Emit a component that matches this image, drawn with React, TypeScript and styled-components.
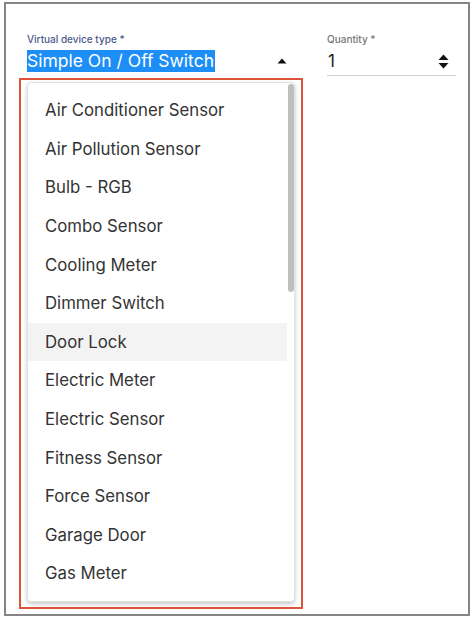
import React from 'react';
import styled, {createGlobalStyle} from 'styled-components';

const GlobalStyle = createGlobalStyle`
  html, body {
    margin: 0;
    padding: 0;
    background: #ffffff;
  }

  body {
    font-family: Inter, "Noto Sans", sans-serif;
    color: #333333;
  }
`;

const Frame = styled.div`
  box-sizing: border-box;
  width: 466px;
  height: 614px;
  margin: 2px 0 0 4px;
  border: 2px solid #858585;
  padding: 28px 12px 0 21px;
`;

const FormRow = styled.div`
  display: flex;
  gap: 32px;
`;

const Field = styled.div<{ $width: number }>`
  position: relative;
  width: ${p => p.$width}px;
  display: flex;
  flex-direction: column;
`;

const Label = styled.label<{ $tone: 'blue' | 'gray' }>`
  font-size: 10px;
  line-height: 14px;
  font-weight: 500;
  color: ${p => (p.$tone === 'blue' ? '#4a5b8c' : '#767676')};
  margin-bottom: 4px;
`;

const ValueRow = styled.div<{ $underline?: boolean }>`
  display: flex;
  align-items: center;
  justify-content: space-between;
  height: 22px;
  padding-bottom: 3px;
  border-bottom: ${p => (p.$underline ? '1.5px solid #cfcfcf' : '1.5px solid transparent')};
`;

const Selected = styled.span`
  background: #1e8ef7;
  color: #ffffff;
  font-size: 17.5px;
  line-height: 22px;
  padding: 0 1px 0 0;
`;

const Value = styled.span`
  font-size: 17px;
  line-height: 22px;
  color: #222222;
  padding-left: 1px;
`;

const Arrow = styled.svg`
  margin-right: 8px;
  flex: none;
`;

const Spinner = styled.svg`
  margin-right: 7px;
  flex: none;
`;

const Annotation = styled.div`
  position: absolute;
  top: 46px;
  left: -8px;
  width: 284px;
  height: 531px;
  box-sizing: border-box;
  border: 2px solid #e0533b;
  padding: 2px 6px 5px 6px;
`;

const Menu = styled.div`
  position: relative;
  height: 520px;
  box-sizing: border-box;
  background: #ffffff;
  border: 1px solid #dfe3e0;
  border-radius: 4px;
  box-shadow: 0 2px 4px rgba(0, 0, 0, 0.22);
  overflow: hidden;
`;

const List = styled.ul`
  list-style: none;
  margin: 0;
  padding: 8px 7px 0 0;
`;

const Option = styled.li<{ $hover?: boolean }>`
  height: 38.6px;
  display: flex;
  align-items: center;
  padding-left: 17px;
  font-size: 16.8px;
  color: #333333;
  background: ${p => (p.$hover ? '#f3f3f3' : 'transparent')};
`;

const Thumb = styled.div`
  position: absolute;
  top: 1px;
  right: 0;
  width: 6px;
  height: 208px;
  border-radius: 3px;
  background: #bfbfbf;
`;

const options = [
  'Air Conditioner Sensor',
  'Air Pollution Sensor',
  'Bulb - RGB',
  'Combo Sensor',
  'Cooling Meter',
  'Dimmer Switch',
  'Door Lock',
  'Electric Meter',
  'Electric Sensor',
  'Fitness Sensor',
  'Force Sensor',
  'Garage Door',
  'Gas Meter',
];

function App() {
  return (
    <>
      <GlobalStyle/>
      <Frame>
        <FormRow>
          <Field $width={268}>
            <Label $tone="blue">Virtual device type *</Label>
            <ValueRow>
              <Selected>Simple On / Off Switch</Selected>
              <Arrow width="10" height="6" viewBox="0 0 10 6">
                <path d="M5 0.5 L9.5 5.5 L0.5 5.5 Z" fill="#111"/>
              </Arrow>
            </ValueRow>
            <Annotation>
              <Menu>
                <List>
                  {options.map(o =>
                    <Option key={o} $hover={o === 'Door Lock'}>{o}</Option>
                  )}
                </List>
                <Thumb/>
              </Menu>
            </Annotation>
          </Field>
          <Field $width={129}>
            <Label $tone="gray">Quantity *</Label>
            <ValueRow $underline>
              <Value>1</Value>
              <Spinner width="11" height="15" viewBox="0 0 11 15">
                <path d="M5.5 0.5 L10.5 6 L0.5 6 Z" fill="#111"/>
                <path d="M0.5 9 L10.5 9 L5.5 14.5 Z" fill="#111"/>
              </Spinner>
            </ValueRow>
          </Field>
        </FormRow>
      </Frame>
    </>
  );
}

export default App;
